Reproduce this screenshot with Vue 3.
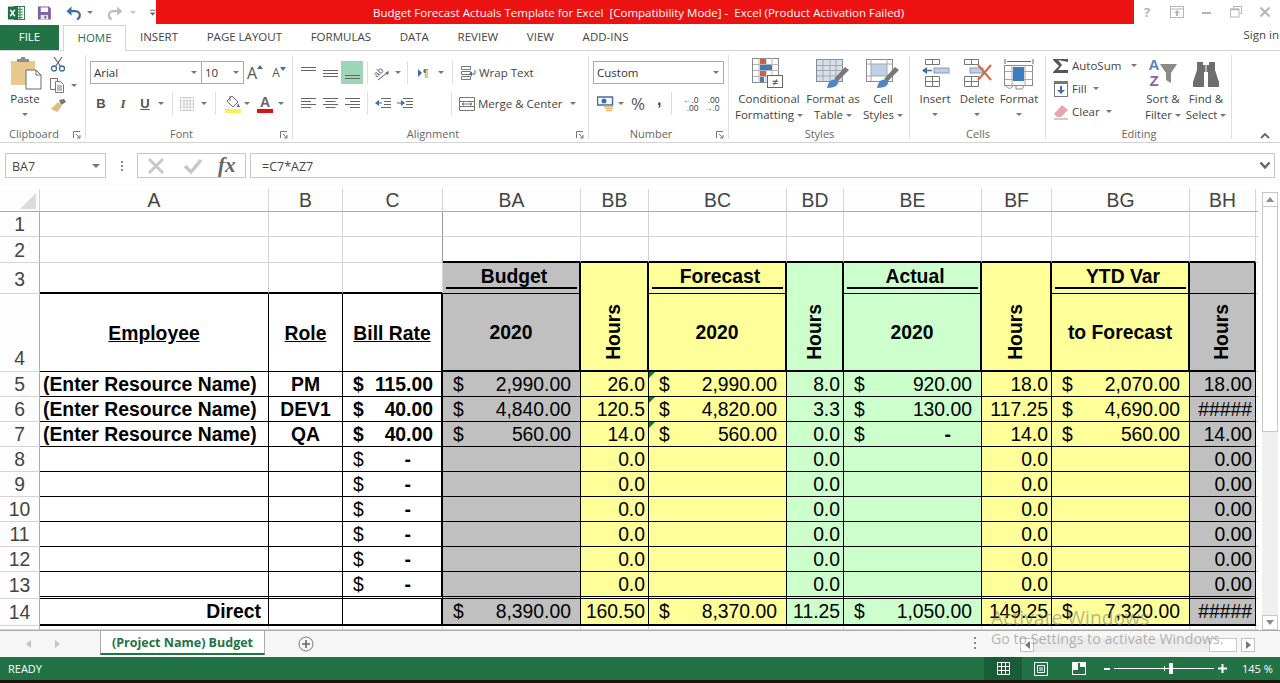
<script setup>
const tabs = ["INSERT", "PAGE LAYOUT", "FORMULAS", "DATA", "REVIEW", "VIEW", "ADD-INS"];

const columns = [
  { name: "A", width: 229 },
  { name: "B", width: 74 },
  { name: "C", width: 100 },
  { name: "BA", width: 138 },
  { name: "BB", width: 68 },
  { name: "BC", width: 138 },
  { name: "BD", width: 57 },
  { name: "BE", width: 138 },
  { name: "BF", width: 70 },
  { name: "BG", width: 138 },
  { name: "BH", width: 66 }
];

function money(color, val, extra = "") {
  return { kind: "money", cls: color + " " + extra, val };
}
function hours(color, val) {
  return { kind: "num", cls: color, val };
}

function buildRow(n, name, role, rate, v, height, extra = "") {
  return {
    n,
    name,
    role,
    rate,
    height,
    extra,
    cells: [
      money("gray", v[0]),
      hours("yellow", v[1]),
      money("yellow", v[2], v[9] ? "tick" : ""),
      hours("green", v[3]),
      money("green", v[4]),
      hours("yellow", v[5]),
      money("yellow", v[6]),
      hours("gray", v[7])
    ]
  };
}

const blank = [null, "0.0", null, "0.0", null, "0.0", null, "0.00"];
const rows = [
  buildRow(5, "(Enter Resource Name)", "PM", "115.00", ["2,990.00", "26.0", "2,990.00", "8.0", "920.00", "18.0", "2,070.00", "18.00", 0, true], 25),
  buildRow(6, "(Enter Resource Name)", "DEV1", "40.00", ["4,840.00", "120.5", "4,820.00", "3.3", "130.00", "117.25", "4,690.00", "#####", 0, true], 25),
  buildRow(7, "(Enter Resource Name)", "QA", "40.00", ["560.00", "14.0", "560.00", "0.0", "-", "14.0", "560.00", "14.00", 0, true], 25),
  buildRow(8, "", "", "-", blank, 25),
  buildRow(9, "", "", "-", blank, 25),
  buildRow(10, "", "", "-", blank, 25),
  buildRow(11, "", "", "-", blank, 25),
  buildRow(12, "", "", "-", blank, 25),
  buildRow(13, "", "", "-", blank, 27, "before-total")
];
const total = buildRow(14, "Direct", "", "", ["8,390.00", "160.50", "8,370.00", "11.25", "1,050.00", "149.25", "7,320.00", "#####"], 27, "total");
</script>

<template>
  <div class="app">
    <!-- title bar -->
    <div class="titlebar">
      <div class="qat">
        <svg width="20" height="20" viewBox="0 0 20 20" class="q-xl">
          <rect x="8" y="3" width="11" height="14" fill="#fff" stroke="#217346" />
          <path d="M11 6h6M11 9h6M11 12h6M11 15h6M14 3v14" stroke="#217346" />
          <rect x="1" y="3" width="11" height="14" fill="#1d7044" />
          <path d="M3.5 6.5l5 7M8.5 6.5l-5 7" stroke="#fff" stroke-width="1.6" />
        </svg>
        <svg width="16" height="16" viewBox="0 0 16 16" class="q-save">
          <path d="M1 1h12l2 2v12H1z" fill="#7d5fa8" />
          <rect x="4" y="2" width="8" height="5" fill="#fff" />
          <rect x="4" y="10" width="8" height="5" fill="#e6e0ef" />
          <rect x="8" y="11" width="2" height="3" fill="#7d5fa8" />
        </svg>
        <svg width="18" height="16" viewBox="0 0 18 16" class="q-undo">
          <path d="M4 6h7c3 0 5 2 5 4.500 0 2-1 3.500-3 4.500" fill="none" stroke="#3e6ea5" stroke-width="2.400" />
          <path d="M7 1L1.500 6 7 11z" fill="#3e6ea5" />
        </svg>
        <i class="caret q-c1"></i>
        <svg width="18" height="16" viewBox="0 0 18 16" class="q-redo">
          <path d="M14 6H7c-3 0-5 2-5 4.500 0 2 1 3.500 3 4.500" fill="none" stroke="#bdbdbd" stroke-width="2.400" />
          <path d="M11 1l5.500 5L11 11z" fill="#bdbdbd" />
        </svg>
        <i class="caret q-c2 light"></i>
        <svg width="8" height="8" viewBox="0 0 8 8" class="q-more">
          <path d="M1 1h6" stroke="#666" />
          <path d="M1 3.500h6L4 7z" fill="#666" />
        </svg>
      </div>
      <div class="red-title">Budget Forecast Actuals Template for Excel&nbsp; [Compatibility Mode] -&nbsp; Excel (Product Activation Failed)</div>
      <div class="winbtns">
        <span class="help">?</span>
        <svg width="14" height="12" viewBox="0 0 14 12"><rect x=".5" y=".5" width="13" height="11" fill="none" stroke="#b5b5b5" /><path d="M1 3h12" stroke="#b5b5b5" /><path d="M7 4l3 3H8v3H6V7H4z" fill="#b5b5b5" /></svg>
        <svg width="12" height="12" viewBox="0 0 12 12"><path d="M1 7h9" stroke="#b5b5b5" stroke-width="2" /></svg>
        <svg width="12" height="12" viewBox="0 0 12 12"><path d="M3.500 2.500V.500h8v7h-2" fill="none" stroke="#b5b5b5" /><rect x=".5" y="3" width="8.500" height="8" fill="none" stroke="#b5b5b5" /><path d="M1 3.500h8" stroke="#b5b5b5" stroke-width="1.500" /></svg>
        <svg width="12" height="12" viewBox="0 0 12 12"><path d="M1.500 1.500l9 9M10.500 1.500l-9 9" stroke="#b5b5b5" stroke-width="2" /></svg>
      </div>
    </div>

    <!-- tabs -->
    <div class="tabs">
      <div class="tab-file">FILE</div>
      <div class="tab-home">HOME</div>
      <div class="tab-list">
        <span v-for="t in tabs" :key="t">{{ t }}</span>
      </div>
      <div class="signin">Sign in</div>
    </div>

    <!-- ribbon -->
    <div class="ribbon">
      <section class="group g-clip">
        <div class="g-body clip-body">
          <div class="big paste">
            <svg width="34" height="34" viewBox="0 0 34 34">
              <rect x="3" y="5" width="24" height="24" fill="#e8c98e" />
              <path d="M9 6V3h4V1h4v2h4v3z" fill="#8b8b8b" />
              <path d="M18 14h10l5 5v14H18z" fill="#fff" stroke="#6b6b6b" />
              <path d="M28 14v5h5" fill="none" stroke="#6b6b6b" />
            </svg>
            <span class="big-t">Paste</span>
            <i class="caret solo"></i>
          </div>
          <div class="clip-col">
            <svg width="16" height="16" viewBox="0 0 16 16">
              <path d="M4 1l7 10M12 1L5 11" stroke="#6f6f6f" stroke-width="1.300" />
              <circle cx="4" cy="12.500" r="2.500" fill="none" stroke="#3e6ea5" stroke-width="1.300" />
              <circle cx="12" cy="12.500" r="2.500" fill="none" stroke="#3e6ea5" stroke-width="1.300" />
            </svg>
            <div class="copy-row">
              <svg width="15" height="15" viewBox="0 0 15 15">
                <path d="M.5.5h7v11h-7z" fill="#fff" stroke="#777" />
                <path d="M5.500 3.500h5l3 3v8h-8z" fill="#fff" stroke="#777" />
                <path d="M7 8h5M7 10h5M7 12h5" stroke="#777" />
              </svg>
              <i class="caret"></i>
            </div>
            <svg width="17" height="15" viewBox="0 0 17 15">
              <path d="M9 1l5-1 2 3-5 3z" fill="#777" />
              <path d="M8 3l4 4-5 6-6-3z" fill="#e4bb7d" />
            </svg>
          </div>
        </div>
        <div class="g-label left-label">Clipboard<svg class="launch" width="8" height="8" viewBox="0 0 8 8"><path d="M.5 7V.5H7M3 3l4 4M4 7h3V4" fill="none" stroke="#777" /></svg></div>
      </section>

      <section class="group g-font">
        <div class="g-body stack">
          <div class="rowline">
            <div class="select s-font"><span>Arial</span><i class="caret"></i></div>
            <div class="select s-size"><span>10</span><i class="caret"></i></div>
            <span class="grow up">A<svg width="6" height="4" viewBox="0 0 6 4"><path d="M3 0l3 4H0z" fill="#3e6ea5" /></svg></span>
            <span class="grow down">A<svg width="6" height="4" viewBox="0 0 6 4"><path d="M3 4l3-4H0z" fill="#3e6ea5" /></svg></span>
          </div>
          <div class="rowline font-row2">
            <span class="fmt f-b">B</span>
            <span class="fmt f-i">I</span>
            <span class="fmt f-u">U</span>
            <i class="caret c-u"></i>
            <b class="vsep s1"></b>
            <svg class="ic-border" width="14" height="14" viewBox="0 0 14 14"><path d="M.5.500h13v13H.500zM7 .5v13M.5 7h13M4 .5v13M10 .5v13M.5 4h13M.5 10h13" fill="none" stroke="#a8a8a8" stroke-dasharray="1 1" /></svg>
            <i class="caret c-b"></i>
            <b class="vsep s2"></b>
            <svg class="ic-fill" width="18" height="18" viewBox="0 0 18 18">
              <path d="M8 1l6 6-5 5-6-6z" fill="#fff" stroke="#6b6b6b" />
              <path d="M6 1v5" stroke="#6b6b6b" />
              <path d="M14 8l2 4h-3z" fill="#3e6ea5" />
              <rect x="1" y="14" width="16" height="4" fill="#f6f25a" />
            </svg>
            <i class="caret c-f"></i>
            <span class="font-color">A</span>
            <i class="caret c-a"></i>
          </div>
        </div>
        <div class="g-label pad-r">Font<svg class="launch" width="8" height="8" viewBox="0 0 8 8"><path d="M.5 7V.5H7M3 3l4 4M4 7h3V4" fill="none" stroke="#777" /></svg></div>
      </section>

      <section class="group g-align">
        <div class="g-body stack">
          <div class="rowline">
            <span class="al"><svg width="15" height="14" viewBox="0 0 15 14"><path d="M0 1.500h15M0 4.500h15" stroke="#666" /></svg></span>
            <span class="al"><svg width="15" height="14" viewBox="0 0 15 14"><path d="M0 4.500h15M0 7.500h15M0 10.500h15" stroke="#666" /></svg></span>
            <span class="al on"><svg width="15" height="14" viewBox="0 0 15 14"><path d="M0 9.500h15M0 12.500h15" stroke="#666" /></svg></span>
            <b class="vsep"></b>
            <svg class="orient" width="18" height="16" viewBox="0 0 18 16">
              <text x="6" y="10" text-anchor="middle" font-size="9" fill="#666" font-family="Liberation Sans, sans-serif" transform="rotate(-45 6 8)">ab</text>
              <path d="M5 15l10-8" stroke="#555" />
              <path d="M16 6l-1 4-3-2z" fill="#3e6ea5" />
            </svg>
            <i class="caret"></i>
            <b class="vsep v2"></b>
            <svg class="para" width="14" height="12" viewBox="0 0 14 12">
              <path d="M0 2l4 4-4 4z" fill="#3e6ea5" />
              <text x="5" y="10" font-size="10" fill="#666" font-family="Liberation Sans, sans-serif">¶</text>
            </svg>
            <i class="caret"></i>
            <b class="vsep v3"></b>
            <svg class="wrap-ic" width="16" height="16" viewBox="0 0 16 16"><path d="M1.500 1.500h9v3h-9zM1.500 6.500h9v3h-9zM1.500 11.500h9v3h-9z" fill="none" stroke="#777" /><path d="M15 5v4h-5" fill="none" stroke="#3e6ea5" /><path d="M12 6.500L9 9l3 2.500z" fill="#3e6ea5" /></svg>
            <span class="lbl">Wrap Text</span>
          </div>
          <div class="rowline">
            <span class="al"><svg width="15" height="11" viewBox="0 0 15 11"><path d="M0 .5h15M0 3.500h10M0 6.500h15M0 9.500h10" stroke="#666" /></svg></span>
            <span class="al"><svg width="15" height="11" viewBox="0 0 15 11"><path d="M0 .5h15M2.500 3.500h10M0 6.500h15M2.500 9.500h10" stroke="#666" /></svg></span>
            <span class="al"><svg width="15" height="11" viewBox="0 0 15 11"><path d="M0 .5h15M5 3.500h10M0 6.500h15M5 9.500h10" stroke="#666" /></svg></span>
            <b class="vsep"></b>
            <svg class="indent i1" width="16" height="11" viewBox="0 0 16 11"><path d="M6 .5h10M9 3.500h7M9 6.500h7M6 9.500h10" stroke="#666" /><path d="M0 5l4-3v6z" fill="#3e6ea5" /><path d="M3 5h4" stroke="#3e6ea5" /></svg>
            <svg class="indent i2" width="16" height="11" viewBox="0 0 16 11"><path d="M6 .5h10M9 3.500h7M9 6.500h7M6 9.500h10" stroke="#666" /><path d="M8 5L4 2v6z" fill="#3e6ea5" /><path d="M0 5h4" stroke="#3e6ea5" /></svg>
            <b class="vsep v4"></b>
            <svg class="wrap-ic" width="16" height="16" viewBox="0 0 16 16"><path d="M.5 1.500h15v13H.500zM.5 5.500h15M.5 10.500h15" fill="none" stroke="#777" /><path d="M3 8h10M3 8l2-1.500M3 8l2 1.500M13 8l-2-1.500M13 8l-2 1.500" fill="none" stroke="#777" /></svg>
            <span class="lbl">Merge &amp; Center</span>
            <i class="caret c-merge"></i>
          </div>
        </div>
        <div class="g-label pad-r">Alignment<svg class="launch" width="8" height="8" viewBox="0 0 8 8"><path d="M.5 7V.5H7M3 3l4 4M4 7h3V4" fill="none" stroke="#777" /></svg></div>
      </section>

      <section class="group g-number">
        <div class="g-body stack">
          <div class="rowline">
            <div class="select s-custom"><span>Custom</span><i class="caret"></i></div>
          </div>
          <div class="rowline num-row">
            <svg width="17" height="16" viewBox="0 0 17 16" class="cur">
              <rect x=".5" y="1" width="15" height="8" fill="#fff" stroke="#3e6ea5" stroke-width="1.500" />
              <circle cx="7" cy="5" r="2.500" fill="#3e6ea5" />
              <path d="M7 10.500h9M8 12.500h8M9 14.500h6" stroke="#e4bb7d" stroke-width="1.500" />
            </svg>
            <i class="caret c-cur"></i>
            <span class="pct">%</span>
            <span class="comma">,</span>
            <b class="vsep v5"></b>
            <span class="dec d1"><em>←</em>.0<br />.00</span>
            <span class="dec d2">.00<br /><em>→</em>.0</span>
          </div>
        </div>
        <div class="g-label pad-r">Number<svg class="launch" width="8" height="8" viewBox="0 0 8 8"><path d="M.5 7V.5H7M3 3l4 4M4 7h3V4" fill="none" stroke="#777" /></svg></div>
      </section>

      <section class="group g-styles">
        <div class="g-body bigs">
          <div class="big w-cond">
            <svg width="34" height="34" viewBox="0 0 34 34">
              <rect x=".5" y="2.500" width="26" height="24" fill="#fff" stroke="#8a8a8a" />
              <path d="M7 2v25M14 2v25M20 2v25M1 8.500h26M1 14.500h26M1 20.500h26" stroke="#b5b5b5" />
              <rect x="8" y="3" width="6" height="5" fill="#d0603d" />
              <rect x="8" y="9" width="12" height="5" fill="#3e7ebf" />
              <rect x="8" y="15" width="6" height="5" fill="#d0603d" />
              <rect x="8" y="21" width="4" height="5" fill="#3e7ebf" />
              <rect x="15.500" y="19.500" width="15" height="12" fill="#fff" stroke="#666" />
              <text x="23" y="30" text-anchor="middle" font-size="11" fill="#444" font-family="Liberation Sans, sans-serif">≠</text>
            </svg>
            <span class="big-t">Conditional</span>
            <span class="big-t">Formatting<i class="caret in"></i></span>
          </div>
          <div class="big w-table">
            <svg width="34" height="34" viewBox="0 0 34 34">
              <rect x=".5" y="3.500" width="26" height="22" fill="#d6dfee" stroke="#8a8a8a" />
              <path d="M7 3v22M14 3v22M20 3v22M1 9.500h26M1 14.500h26M1 20h26" stroke="#a8a8a8" />
              <path d="M18 23l11-12 4 3-11 11z" fill="#777" />
              <path d="M11 32c1-7 5-10 11-8 1 4-1 8-11 8z" fill="#4f86c6" />
            </svg>
            <span class="big-t">Format as</span>
            <span class="big-t">Table<i class="caret in"></i></span>
          </div>
          <div class="big w-cell">
            <svg width="34" height="34" viewBox="0 0 34 34">
              <rect x=".5" y="3.500" width="26" height="22" fill="#fff" stroke="#8a8a8a" />
              <rect x="5" y="8" width="16" height="12" fill="#bcd0e8" />
              <path d="M5 3v22M21 3v22M1 8h26M1 20h26" stroke="#a8a8a8" />
              <path d="M18 23l11-12 4 3-11 11z" fill="#777" />
              <path d="M11 32c1-7 5-10 11-8 1 4-1 8-11 8z" fill="#4f86c6" />
            </svg>
            <span class="big-t">Cell</span>
            <span class="big-t">Styles<i class="caret in"></i></span>
          </div>
        </div>
        <div class="g-label">Styles</div>
      </section>

      <section class="group g-cells">
        <div class="g-body bigs">
          <div class="big w-ins">
            <svg width="30" height="34" viewBox="0 0 30 34">
              <path d="M5.500 3.500h14v5h-14zM12.500 3.500v5M5.500 20.500h14v10h-14zM12.500 20.500v10M5.500 25.500h14" fill="none" stroke="#777" />
              <rect x="14" y="12" width="15" height="5" fill="#bcd0e8" stroke="#8a9bb0" />
              <path d="M3 14.500h9" stroke="#3e6ea5" stroke-width="1.500" />
              <path d="M7 11L2 14.500 7 18z" fill="#3e6ea5" />
            </svg>
            <span class="big-t">Insert</span>
            <i class="caret solo"></i>
          </div>
          <div class="big w-del">
            <svg width="32" height="34" viewBox="0 0 32 34">
              <path d="M3.500 3.500h14v5h-14zM10.500 3.500v5M3.500 20.500h14v10h-14zM10.500 20.500v10M3.500 25.500h14" fill="none" stroke="#777" />
              <rect x="9" y="12" width="13" height="5" fill="#bcd0e8" stroke="#8a9bb0" />
              <path d="M17 9l13 15M30 9L17 24" stroke="#d9664a" stroke-width="2" />
            </svg>
            <span class="big-t">Delete</span>
            <i class="caret solo"></i>
          </div>
          <div class="big w-fmt">
            <svg width="30" height="34" viewBox="0 0 30 34">
              <path d="M1 3v5M29 3v5M3 5.500h24" stroke="#3e6ea5" />
              <rect x=".5" y="9.500" width="28" height="20" fill="#fff" stroke="#8a8a8a" />
              <path d="M8 9v21M21 9v21M1 15.500h28M1 23.500h28" stroke="#a8a8a8" />
              <rect x="9" y="11" width="11" height="14" fill="#3e7ebf" />
              <path d="M2 30c2 3 5 3 7 0M12 30v3h6l2-3" fill="none" stroke="#8a8a8a" />
            </svg>
            <span class="big-t">Format</span>
            <i class="caret solo"></i>
          </div>
        </div>
        <div class="g-label">Cells</div>
      </section>

      <section class="group g-edit">
        <div class="g-body edit-body">
          <div class="edit-col">
            <div class="edit-row">
              <svg width="16" height="16" viewBox="0 0 16 16"><path d="M15 4V1H0v1l6 6-6 6v1h15v-3H5l4-5-4-5z" fill="#555" /></svg>
              <span>AutoSum</span><i class="caret c-sum"></i>
            </div>
            <div class="edit-row">
              <svg width="16" height="16" viewBox="0 0 16 16"><rect x="1.500" y=".5" width="13" height="15" fill="#fff" stroke="#777" /><rect x="1" y="0" width="14" height="3" fill="#777" /><path d="M8 5v6" stroke="#3e6ea5" stroke-width="2" /><path d="M4 9h8l-4 4z" fill="#3e6ea5" /></svg>
              <span>Fill</span><i class="caret in"></i>
            </div>
            <div class="edit-row">
              <svg width="16" height="16" viewBox="0 0 16 16"><path d="M9 1l6 5-7 7H4L1 10z" fill="#e8a3ad" /><path d="M1 15h14" stroke="#9a9a9a" /></svg>
              <span>Clear</span><i class="caret in"></i>
            </div>
          </div>
          <div class="big w-sort">
            <svg width="34" height="34" viewBox="0 0 34 34">
              <text x="8" y="14" text-anchor="middle" font-size="15" fill="#4f86c6" font-family="Liberation Sans, sans-serif" font-weight="700">A</text>
              <text x="8" y="30" text-anchor="middle" font-size="15" fill="#8b5fa8" font-family="Liberation Sans, sans-serif" font-weight="700">Z</text>
              <path d="M14 8h17l-6 9v10l-5-3v-7z" fill="#8a8a8a" />
            </svg>
            <span class="big-t">Sort &amp;</span>
            <span class="big-t">Filter<i class="caret in"></i></span>
          </div>
          <div class="big w-find">
            <svg width="30" height="34" viewBox="0 0 30 34">
              <path d="M6 6h6v3h6V6h6v8l4 12v5H17V16h-4v15H2v-5l4-12z" fill="#6e6e6e" />
              <path d="M15 9v20" stroke="#fff" />
            </svg>
            <span class="big-t">Find &amp;</span>
            <span class="big-t">Select<i class="caret in"></i></span>
          </div>
        </div>
        <div class="g-label">Editing</div>
      </section>

      <svg class="collapse" width="10" height="7" viewBox="0 0 10 7"><path d="M1 6l4-4 4 4" fill="none" stroke="#666" stroke-width="1.800" /></svg>
    </div>

    <!-- formula bar -->
    <div class="formula">
      <div class="namebox"><span>BA7</span><i class="caret dark"></i></div>
      <div class="dots"><i></i><i></i><i></i></div>
      <div class="fx-box">
        <svg width="18" height="18" viewBox="0 0 18 18"><path d="M2 2l14 14M16 2L2 16" stroke="#c8c8c8" stroke-width="3" /></svg>
        <svg width="20" height="18" viewBox="0 0 20 18"><path d="M2 9l6 6L18 3" fill="none" stroke="#c8c8c8" stroke-width="3.500" /></svg>
        <span class="fx">fx</span>
      </div>
      <div class="formula-input">
        <span>=C7*AZ7</span>
        <svg width="12" height="9" viewBox="0 0 12 9"><path d="M1.500 1.500L6 6.500l4.500-5" fill="none" stroke="#666" stroke-width="2.500" /></svg>
      </div>
    </div>

    <!-- sheet -->
    <div class="sheet">
      <table class="grid">
        <colgroup>
          <col style="width: 40px" />
          <col v-for="c in columns" :key="c.name" :style="{ width: c.width + 'px' }" />
          <col style="width: 2px" />
        </colgroup>
        <tbody>
          <tr class="hdr">
            <th class="corner"><i></i></th>
            <th v-for="c in columns" :key="c.name" class="colhead">{{ c.name }}</th>
            <th class="colhead end"></th>
          </tr>

          <tr class="r25">
            <th class="rowhead low">1</th>
            <td v-for="c in columns" :key="c.name" class="plain" :class="{ freeze: c.name === 'C' }"></td>
            <td class="plain end"></td>
          </tr>
          <tr class="r26">
            <th class="rowhead low">2</th>
            <td v-for="c in columns" :key="c.name" class="plain" :class="{ freeze: c.name === 'C', 'top-of-block': c.name.length === 2 }"></td>
            <td class="plain end"></td>
          </tr>

          <tr class="r31">
            <th class="rowhead r3">3</th>
            <td class="plain heavy-b"></td>
            <td class="plain heavy-b"></td>
            <td class="plain heavy-b edge"></td>
            <td class="gray head3"><div class="head-t">Budget</div></td>
            <td class="yellow vcol" rowspan="2"><span class="vert">Hours</span></td>
            <td class="yellow head3"><div class="head-t">Forecast</div></td>
            <td class="green vcol" rowspan="2"><span class="vert">Hours</span></td>
            <td class="green head3"><div class="head-t">Actual</div></td>
            <td class="yellow vcol" rowspan="2"><span class="vert">Hours</span></td>
            <td class="yellow head3"><div class="head-t">YTD Var</div></td>
            <td class="gray head3 noline"></td>
            <td class="plain end"></td>
          </tr>
          <tr class="r78">
            <th class="rowhead bottom">4</th>
            <td class="title-cell"><u>Employee</u></td>
            <td class="title-cell"><u>Role</u></td>
            <td class="title-cell edge"><u>Bill Rate</u></td>
            <td class="gray year">2020</td>
            <td class="yellow year">2020</td>
            <td class="green year">2020</td>
            <td class="yellow year">to Forecast</td>
            <td class="gray vcol"><span class="vert">Hours</span></td>
            <td class="plain end"></td>
          </tr>

          <tr v-for="r in [...rows, total]" :key="r.n" :class="r.extra" :style="{ height: r.height + 'px' }">
            <th class="rowhead">{{ r.n }}</th>
            <td class="cell name" :class="{ right: r.extra === 'total' }">{{ r.name }}</td>
            <td class="cell role">{{ r.role }}</td>
            <td class="cell rate edge">
              <div v-if="r.rate" class="acct" :class="{ bold: r.n < 8, dash: r.rate === '-' }"><span>$</span><span class="v">{{ r.rate }}</span></div>
            </td>
            <td v-for="(c, i) in r.cells" :key="i" class="cell" :class="c.cls">
              <div v-if="c.kind === 'money' && c.val" class="acct" :class="{ dash: c.val === '-' }"><span>$</span><span class="v">{{ c.val }}</span></div>
              <div v-else-if="c.kind === 'num'" class="hrs">{{ c.val }}</div>
            </td>
            <td class="plain end"></td>
          </tr>

          <tr class="r4">
            <th class="rowhead"></th>
            <td v-for="c in columns" :key="c.name" class="plain"></td>
            <td class="plain end"></td>
          </tr>
        </tbody>
      </table>

      <div class="vscroll">
        <div class="sb-btn"><svg width="8" height="5" viewBox="0 0 8 5"><path d="M4 0l4 5H0z" fill="#8a8a8a" /></svg></div>
        <div class="sb-thumb"></div>
        <div class="sb-track"></div>
        <div class="sb-btn"><svg width="8" height="5" viewBox="0 0 8 5"><path d="M4 5l4-5H0z" fill="#8a8a8a" /></svg></div>
      </div>
    </div>

    <!-- sheet tabs -->
    <div class="sheetbar">
      <div class="sheet-nav">
        <svg width="5" height="8" viewBox="0 0 5 8"><path d="M5 0L0 4l5 4z" fill="#c4c4c4" /></svg>
        <svg width="5" height="8" viewBox="0 0 5 8"><path d="M0 0l5 4-5 4z" fill="#c4c4c4" /></svg>
      </div>
      <div class="sheet-tab">(Project Name) Budget</div>
      <svg class="add" width="16" height="16" viewBox="0 0 16 16"><circle cx="8" cy="8" r="7" fill="none" stroke="#777" /><path d="M8 4v8M4 8h8" stroke="#666" stroke-width="1.600" /></svg>
      <div class="tab-dots"><i></i><i></i><i></i></div>
      <div class="hscroll">
        <div class="hs-btn"><svg width="5" height="8" viewBox="0 0 5 8"><path d="M5 0L0 4l5 4z" fill="#777" /></svg></div>
        <div class="hs-track"></div>
        <div class="hs-thumb"></div>
        <div class="hs-btn gap"><svg width="5" height="8" viewBox="0 0 5 8"><path d="M0 0l5 4-5 4z" fill="#777" /></svg></div>
      </div>
    </div>

    <!-- status bar -->
    <div class="status">
      <span class="ready">READY</span>
      <div class="views">
        <span class="view on"><svg width="13" height="13" viewBox="0 0 13 13"><path d="M.5.500h12v12H.500zM4.500.5v12M8.500.5v12M.5 4.500h12M.5 8.500h12" fill="none" stroke="#fff" /></svg></span>
        <span class="view"><svg width="14" height="14" viewBox="0 0 14 14"><path d="M.5.500h13v13H.500z" fill="none" stroke="#fff" /><path d="M3.500 3.500h7v7h-7zM5 6h4M5 8h4" fill="none" stroke="#fff" /></svg></span>
        <span class="view"><svg width="14" height="13" viewBox="0 0 14 13"><rect x=".5" y=".5" width="13" height="12" fill="none" stroke="#fff" /><rect x="1" y="1" width="5" height="7" fill="#fff" /><rect x="8" y="1" width="5" height="4" fill="#fff" /></svg></span>
      </div>
      <div class="zoomer">
        <i class="z-minus"></i>
        <div class="z-track"><i class="z-tick"></i><i class="z-thumb"></i></div>
        <svg width="9" height="9" viewBox="0 0 9 9"><path d="M0 4.500h9M4.500 0v9" stroke="#fff" stroke-width="2" /></svg>
      </div>
      <span class="pctz">145 %</span>
    </div>
    <div class="taskbar"></div>

    <!-- watermark -->
    <div class="wm wm1">Activate Windows</div>
    <div class="wm wm2">Go to Settings to activate Windows.</div>
  </div>
</template>

<style scoped>
.app {
  position: relative;
  width: 1280px;
  height: 683px;
  overflow: hidden;
  background: #fff;
  font-family: "Open Sans", "Noto Sans", sans-serif;
  font-size: 11.500px;
  color: #444;
}

.caret {
  display: inline-block;
  width: 0;
  height: 0;
  border-left: 3px solid transparent;
  border-right: 3px solid transparent;
  border-top: 3px solid #777;
}
.caret.light { border-top-color: #c0c0c0; }
.caret.dark { border-left-width: 4px; border-right-width: 4px; border-top-width: 4px; }
.caret.in { margin-left: 3px; vertical-align: middle; }
.caret.solo { margin-top: 6px; }

/* title bar */
.titlebar {
  display: flex;
  height: 25px;
}
.qat {
  width: 156px;
  display: flex;
  align-items: center;
  flex: none;
}
.q-xl { margin-left: 7px; }
.q-save { margin-left: 11px; }
.q-undo { margin-left: 14px; }
.q-c1 { margin-left: 5px; }
.q-redo { margin-left: 14px; }
.q-c2 { margin-left: 6px; }
.q-more { margin-left: 13px; }
.red-title {
  width: 978px;
  height: 24px;
  box-sizing: border-box;
  padding-right: 13px;
  background: #ec1212;
  color: #fff;
  text-align: center;
  line-height: 26px;
}
.winbtns {
  flex: 1;
  display: flex;
  align-items: center;
  padding-left: 10px;
  gap: 17px;
  height: 23px;
}
.help {
  color: #b5b5b5;
  font-weight: 700;
  font-size: 13px;
  width: 9px;
}

/* tabs */
.tabs {
  display: flex;
  height: 25px;
  align-items: stretch;
  position: relative;
  border-bottom: 1px solid #d4d4d4;
  box-sizing: content-box;
  line-height: 24px;
}
.tab-file {
  width: 59px;
  background: #217346;
  color: #fff;
  text-align: center;
}
.tab-home {
  margin-left: 4px;
  width: 61px;
  height: 25px;
  background: #fff;
  border: 1px solid #d4d4d4;
  border-bottom: 0;
  box-sizing: content-box;
  margin-bottom: -1px;
  text-align: center;
  color: #217346;
}
.tab-list {
  display: flex;
  gap: 28.700px;
  padding-left: 14px;
  color: #444;
}
.signin {
  margin-left: auto;
  padding-right: 1px;
  line-height: 20px;
  color: #444;
}

/* ribbon */
.ribbon {
  position: relative;
  display: flex;
  height: 91px;
  border-bottom: 1px solid #d4d4d4;
  color: #444;
}
.group {
  position: relative;
  display: flex;
  flex-direction: column;
  flex: none;
}
.group::after {
  content: "";
  position: absolute;
  right: 0;
  top: 4px;
  bottom: 3px;
  width: 1px;
  background: #dedede;
}
.g-body { height: 73px; flex: none; }
.g-label {
  position: relative;
  text-align: center;
  font-size: 11px;
  color: #666;
  line-height: 19px;
}
.pad-r { padding-right: 16px; }
.left-label {
  text-align: left;
  padding-left: 9px;
}
.launch {
  position: absolute;
  right: 5px;
  top: 7px;
}
.g-clip { width: 86px; }
.g-font { width: 207px; }
.g-align { width: 296px; }
.g-number { width: 140px; }
.g-styles { width: 181px; }
.g-cells { width: 136px; }
.g-edit { width: 186px; }

.stack {
  display: flex;
  flex-direction: column;
  gap: 8px;
  padding-top: 10px;
  padding-left: 4px;
  box-sizing: border-box;
}
.rowline {
  display: flex;
  align-items: center;
  height: 23px;
}

.big {
  display: flex;
  flex-direction: column;
  align-items: center;
  padding-top: 5px;
  flex: none;
}
.big > svg { height: 34px; margin-bottom: 1px; }
.big-t {
  line-height: 16px;
  white-space: nowrap;
}

.clip-body { display: flex; }
.paste { width: 50px; }
.clip-col {
  display: flex;
  flex-direction: column;
  gap: 6px;
  padding-top: 5px;
  align-items: flex-start;
}
.copy-row {
  display: flex;
  align-items: center;
  gap: 6px;
}

.select {
  display: flex;
  align-items: center;
  justify-content: space-between;
  height: 23px;
  box-sizing: border-box;
  border: 1px solid #ababab;
  padding: 0 4px 0 3px;
  background: #fff;
  color: #333;
}
.s-font { width: 112px; }
.s-size { width: 43px; margin-left: -1px; }
.s-custom { width: 131px; }
.grow {
  position: relative;
  display: inline-flex;
  font-size: 16px;
  color: #555;
  line-height: 1;
}
.up { margin-left: 3px; }
.down { margin-left: 9px; font-size: 12px; align-self: center; }

.fmt {
  width: 22px;
  text-align: center;
  font-size: 13px;
  color: #555;
  font-family: "Liberation Sans", sans-serif;
}
.f-b { font-weight: 700; }
.f-i { font-family: "Liberation Serif", serif; font-style: italic; font-weight: 700; }
.f-u { text-decoration: underline; font-weight: 700; }
.c-u { margin-left: 2px; }
.vsep {
  display: block;
  width: 1px;
  height: 23px;
  background: #dedede;
  flex: none;
  margin: 0 4px;
}
.s1 { margin: 0 7px 0 8px; }
.c-b { margin-left: 7px; }
.s2 { margin: 0 8px; }
.c-f { margin-left: 2px; }
.font-color {
  margin-left: 7px;
  width: 16px;
  font-family: "Liberation Sans", sans-serif;
  font-weight: 700;
  font-size: 14px;
  text-align: center;
  color: #666;
  line-height: 14px;
  border-bottom: 4px solid #e01010;
}
.c-a { margin-left: 5px; }

.al {
  width: 22px;
  height: 23px;
  display: flex;
  align-items: center;
  justify-content: center;
  flex: none;
}
.al.on { background: #9fd5b7; }
.orient { margin-left: 1px; }
.orient + .caret { margin-left: 4px; }
.v2 { margin-left: 6px; }
.para { margin-left: 6px; }
.para + .caret { margin-left: 6px; }
.v3 { margin-left: 8px; margin-right: 7px; }
.lbl { margin-left: 3px; white-space: nowrap; }
.i1 { margin-left: 3px; }
.i2 { margin-left: 6px; }
.v4 { margin-left: 38px; margin-right: 7px; }
.c-merge { margin-left: 7px; }

.num-row { position: relative; padding-left: 4px; }
.c-cur { margin-left: 4px; }
.pct {
  font-size: 17px;
  margin-left: 7px;
  color: #555;
}
.comma {
  font-family: "Liberation Sans", sans-serif;
  font-weight: 700;
  font-size: 16px;
  margin-left: 12px;
  margin-top: -8px;
}
.v5 { margin-left: 9px; margin-right: 10px; }
.dec {
  font-family: "Liberation Sans", sans-serif;
  font-size: 8.500px;
  line-height: 8px;
  text-align: right;
  width: 17px;
  color: #444;
}
.dec em {
  font-style: normal;
  color: #3e6ea5;
  font-weight: 700;
}
.d2 { margin-left: 4px; }

.bigs { display: flex; }
.w-cond { width: 74px; margin-left: 3px; }
.w-table { width: 54px; }
.w-cell { width: 46px; }
.w-ins { width: 42px; margin-left: 4px; }
.w-del { width: 42px; }
.w-fmt { width: 42px; }

.edit-body { display: flex; }
.edit-col {
  width: 96px;
  padding: 3px 0 0 7px;
  flex: none;
  box-sizing: content-box;
}
.edit-row {
  display: flex;
  align-items: center;
  gap: 3px;
  height: 23px;
  white-space: nowrap;
}
.c-sum { margin-left: 7px; }
.w-sort { width: 40px; margin-left: -6px; }
.w-find { width: 46px; }

.collapse {
  position: absolute;
  left: 1260px;
  top: 81px;
}

/* formula bar */
.formula {
  display: flex;
  height: 25px;
  padding: 10px 5px 10px 5px;
  align-items: stretch;
  font-size: 12.500px;
}
.namebox, .fx-box, .formula-input {
  box-sizing: border-box;
  height: 25px;
  border: 1px solid #c8c8c8;
  display: flex;
  align-items: center;
}
.namebox span, .formula-input span { padding-top: 2px; }
.namebox {
  width: 101px;
  justify-content: space-between;
  padding: 0 5px 0 6px;
}
.dots {
  width: 31px;
  display: flex;
  flex-direction: column;
  align-items: center;
  justify-content: center;
  gap: 2px;
}
.dots i, .tab-dots i {
  width: 2px;
  height: 2px;
  background: #8a8a8a;
  display: block;
}
.fx-box {
  width: 109px;
  padding-left: 9px;
  gap: 18px;
}
.fx {
  font-family: "Liberation Serif", serif;
  font-style: italic;
  font-weight: 700;
  font-size: 21px;
  line-height: 1;
  color: #666;
  margin-left: -3px;
}
.formula-input {
  flex: 1;
  margin-left: 4px;
  padding: 0 3px 0 11px;
  justify-content: space-between;
}

/* sheet */
.sheet {
  display: flex;
  height: 441px;
  margin-top: 1px;
}
.grid {
  table-layout: fixed;
  width: 1258px;
  border-collapse: separate;
  border-spacing: 0;
  font-family: "Liberation Sans", Arial, sans-serif;
  font-size: 19.330px;
  color: #000;
  flex: none;
  align-self: flex-start;
}
.grid td, .grid th {
  padding: 0;
  box-sizing: border-box;
  overflow: hidden;
  white-space: nowrap;
  line-height: 1;
}
.hdr { height: 23px; }
.r25 { height: 25px; }
.r26 { height: 26px; }
.r31 { height: 31px; }
.r78 { height: 78px; }
.r4 { height: 4px; }

.corner {
  position: relative;
  background: #fdfdfd;
  border-right: 1px solid #d4d4d4;
  border-bottom: 1px solid #ababab;
}
.corner i {
  position: absolute;
  right: 3px;
  bottom: 2px;
  width: 0;
  height: 0;
  border-left: 16px solid transparent;
  border-bottom: 16px solid #dcdcdc;
}
.grid .colhead {
  background: #fdfdfd;
  font-weight: 400;
  color: #444;
  border-right: 1px solid #d4d4d4;
  border-bottom: 1px solid #ababab;
  text-align: center;
  padding-top: 2px;
}
.grid .colhead.end { border-right: 0; padding: 0; }
.grid .rowhead {
  background: #fdfdfd;
  font-weight: 400;
  color: #444;
  border-right: 1px solid #ababab;
  border-bottom: 1px solid #d4d4d4;
  text-align: center;
  padding-top: 1px;
}
.grid .rowhead.low { padding-top: 2px; }
.grid .rowhead.r3 { padding-top: 4px; }
.grid .rowhead.bottom { vertical-align: bottom; padding: 0 0 3px; }
.r4 .rowhead { height: 4px; padding: 0 !important; }

.plain {
  border-right: 1px solid #d4d4d4;
  border-bottom: 1px solid #d4d4d4;
}
.plain.end { border-right: 0; }
.plain.freeze { border-right: 1px solid #9a9a9a; }
.plain.top-of-block { border-bottom: 2px solid #000; }
.plain.heavy-b { border-bottom: 2px solid #000; }

.gray { background: #c0c0c0; }
.yellow { background: #ffff99; }
.green { background: #ccffcc; }

.grid .gray, .grid .yellow, .grid .green {
  border-right: 2px solid #000;
  border-bottom: 1px solid #000;
}
.head3 {
  vertical-align: top;
}
.head-t {
  margin: 0 2px 0 3px;
  padding: 4px 0 0 5px;
  height: 26px;
  box-sizing: border-box;
  border-bottom: 2px solid #000;
  font-weight: 700;
  text-align: center;
}
.grid .vcol {
  vertical-align: bottom;
  text-align: center;
  padding-bottom: 7px;
  border-bottom: 2px solid #000;
}
.vert {
  display: inline-block;
  writing-mode: vertical-rl;
  transform: rotate(180deg);
  font-weight: 700;
}
.grid .title-cell {
  font-weight: 700;
  text-align: center;
  border-right: 1px solid #000;
  border-bottom: 1px solid #000;
  padding-top: 2px;
}
.grid .title-cell.edge { border-right: 2px solid #000; }
.grid .year {
  font-weight: 700;
  text-align: center;
  border-bottom: 2px solid #000;
  padding-top: 2px;
}

.grid td.cell {
  border-right: 1px solid #000;
  border-bottom: 1px solid #000;
  vertical-align: top;
  padding-top: 2px;
  line-height: 22px;
}
.grid td.cell.edge { border-right: 2px solid #000; }
.grid td.name {
  font-weight: 700;
  padding-left: 3px;
}
.grid td.name.right { text-align: right; padding-right: 7px; }
.role {
  font-weight: 700;
  text-align: center;
}
.acct {
  display: flex;
  justify-content: space-between;
  padding: 0 9px 0 10px;
}
.rate .acct { padding-right: 8px; }
.acct.bold { font-weight: 700; }
.acct.dash { padding-right: 30px; }
.acct.dash .v { font-weight: 700; }
.hrs {
  text-align: right;
  padding-right: 3px;
}
.grid td.tick { position: relative; }
.tick::before {
  content: "";
  position: absolute;
  left: 0;
  top: 0;
  width: 0;
  height: 0;
  border-top: 6px solid #117a2e;
  border-right: 6px solid transparent;
}

.grid .before-total td.cell {
  border-bottom: 3px double #000;
}
.grid .total td.cell {
  border-bottom: 2px solid #000;
}

/* scrollbars */
.vscroll {
  width: 22px;
  flex: none;
  display: flex;
  flex-direction: column;
  padding: 3px 2px 0 4px;
  box-sizing: border-box;
  background: #fff;
}
.sb-btn {
  height: 15px;
  box-sizing: border-box;
  border: 1px solid #c8c8c8;
  background: #fff;
  display: flex;
  align-items: center;
  justify-content: center;
  flex: none;
}
.sb-thumb {
  height: 225px;
  box-sizing: border-box;
  border: 1px solid #c8c8c8;
  border-top: 0;
  background: #fff;
  flex: none;
}
.sb-track { flex: 1; background: #f0f0f0; }

.sheetbar {
  display: flex;
  align-items: flex-start;
  height: 27px;
  border-top: 1px solid #ababab;
  background: #f6f6f6;
  box-sizing: border-box;
}
.sheet-nav {
  width: 100px;
  padding: 9px 0 0 26px;
  box-sizing: border-box;
  display: flex;
  gap: 24px;
}
.sheet-tab {
  width: 165px;
  height: 24px;
  box-sizing: border-box;
  background: #fff;
  border-left: 1px solid #ababab;
  border-right: 1px solid #ababab;
  border-bottom: 2px solid #217346;
  color: #217346;
  font-weight: 700;
  text-align: center;
  font-size: 12.500px;
  line-height: 24px;
}
.add { margin: 5px 0 0 33px; }
.tab-dots {
  margin: 6px 0 0 660px;
  display: flex;
  flex-direction: column;
  gap: 3px;
}
.hscroll {
  display: flex;
  margin: 7px 0 0 44px;
  height: 14px;
}
.hs-btn {
  width: 14px;
  height: 14px;
  box-sizing: border-box;
  border: 1px solid #c0c0c0;
  background: #fff;
  display: flex;
  align-items: center;
  justify-content: center;
}
.hs-btn.gap { margin-left: 4px; }
.hs-track { width: 175px; background: #ececec; }
.hs-thumb {
  width: 28px;
  box-sizing: border-box;
  border: 1px solid #c8c8c8;
  background: #fff;
}

/* status bar */
.status {
  position: relative;
  display: flex;
  align-items: center;
  height: 23px;
  background: #217346;
  color: #fff;
  font-size: 11px;
}
.ready { margin-left: 8px; }
.views {
  display: flex;
  margin-left: 942px;
  height: 23px;
}
.view {
  width: 38px;
  display: flex;
  align-items: center;
  justify-content: center;
}
.view.on { background: #1a5c38; }
.zoomer {
  display: flex;
  align-items: center;
  margin-left: 6px;
}
.z-minus {
  display: block;
  width: 6px;
  height: 2px;
  background: #fff;
}
.z-track {
  position: relative;
  width: 100px;
  height: 1px;
  background: #fff;
  margin: 0 4px;
}
.z-tick {
  position: absolute;
  left: 50px;
  top: -2px;
  width: 1px;
  height: 5px;
  background: #fff;
}
.z-thumb {
  position: absolute;
  left: 55px;
  top: -5px;
  width: 4px;
  height: 11px;
  background: #fff;
}
.pctz { margin-left: 15px; }
.taskbar { height: 3px; background: #1c140c; }

.wm {
  position: absolute;
  color: rgba(120, 120, 120, 0.55);
  white-space: nowrap;
}
.wm1 { left: 991px; top: 605px; font-size: 19.300px; line-height: 26px; }
.wm2 { left: 991px; top: 629px; font-size: 14.200px; line-height: 20px; }
</style>

<style>
html, body {
  margin: 0;
  overflow: hidden;
}
</style>
